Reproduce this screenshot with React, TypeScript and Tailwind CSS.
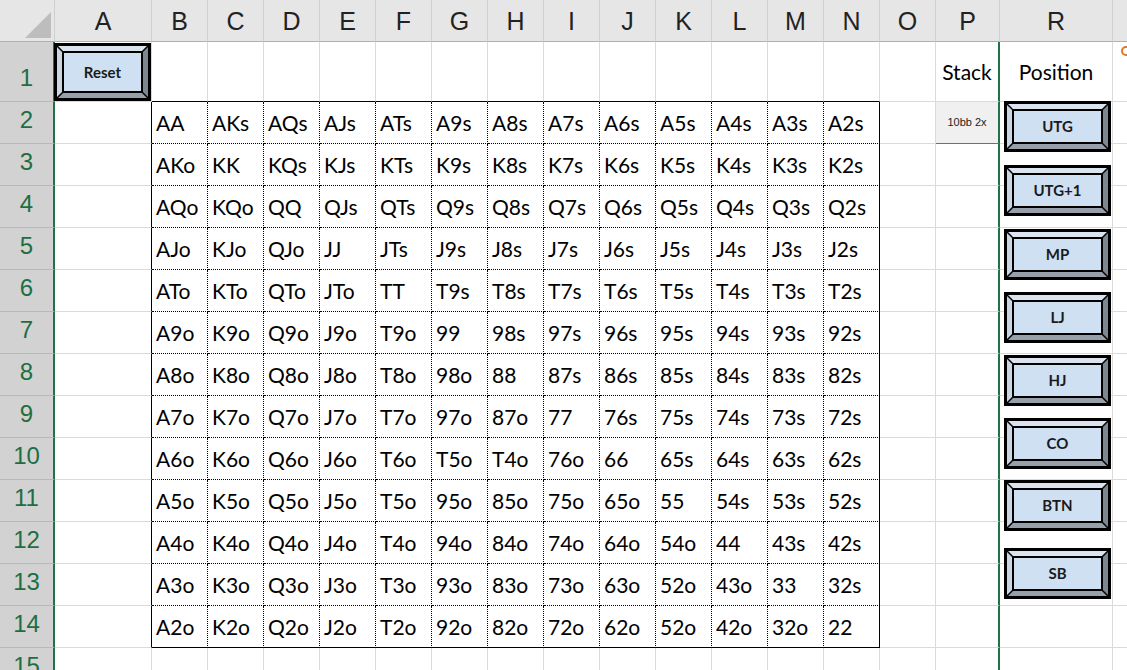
import React from "react";

const HANDS: string[][] = [
  "AA AKs AQs AJs ATs A9s A8s A7s A6s A5s A4s A3s A2s",
  "AKo KK KQs KJs KTs K9s K8s K7s K6s K5s K4s K3s K2s",
  "AQo KQo QQ QJs QTs Q9s Q8s Q7s Q6s Q5s Q4s Q3s Q2s",
  "AJo KJo QJo JJ JTs J9s J8s J7s J6s J5s J4s J3s J2s",
  "ATo KTo QTo JTo TT T9s T8s T7s T6s T5s T4s T3s T2s",
  "A9o K9o Q9o J9o T9o 99 98s 97s 96s 95s 94s 93s 92s",
  "A8o K8o Q8o J8o T8o 98o 88 87s 86s 85s 84s 83s 82s",
  "A7o K7o Q7o J7o T7o 97o 87o 77 76s 75s 74s 73s 72s",
  "A6o K6o Q6o J6o T6o T5o T4o 76o 66 65s 64s 63s 62s",
  "A5o K5o Q5o J5o T5o 95o 85o 75o 65o 55 54s 53s 52s",
  "A4o K4o Q4o J4o T4o 94o 84o 74o 64o 54o 44 43s 42s",
  "A3o K3o Q3o J3o T3o 93o 83o 73o 63o 52o 43o 33 32s",
  "A2o K2o Q2o J2o T2o 92o 82o 72o 62o 52o 42o 32o 22",
].map((r) => r.split(" "));

// spreadsheet columns, widths written out so tailwind picks them up
const COLS: { label: string; w: string }[] = [
  { label: "A", w: "w-[97px]" },
  ...["B", "C", "D", "E", "F", "G", "H", "I", "J", "K", "L", "M", "N", "O"].map(
    (label) => ({ label, w: "w-[56px]" }),
  ),
  { label: "P", w: "w-[64px]" },
  { label: "R", w: "w-[113px]" },
  { label: "", w: "w-[40px]" },
];

const COL_P = 15;
const COL_R = 16;

const ROWS = Array.from({ length: 15 }, (_, i) => i + 1);

const POSITIONS: { name: string; top: string }[] = [
  { name: "UTG", top: "top-[101px]" },
  { name: "UTG+1", top: "top-[165px]" },
  { name: "MP", top: "top-[229px]" },
  { name: "LJ", top: "top-[292px]" },
  { name: "HJ", top: "top-[355px]" },
  { name: "CO", top: "top-[418px]" },
  { name: "BTN", top: "top-[480px]" },
  { name: "SB", top: "top-[548px]" },
];

const inTable = (r: number, c: number) => r >= 2 && r <= 14 && c >= 1 && c <= 13;

function rightBorder(r: number, c: number) {
  if (c === 0 && r >= 2 && r <= 14) return "border-r border-r-black";
  if (inTable(r, c))
    return c === 13
      ? "border-r border-r-black"
      : "border-r border-r-black [border-right-style:dotted]";
  if (c === COL_P) return "border-r-2 border-r-[#217346]";
  return "border-r border-r-[#dadada]";
}

function bottomBorder(r: number, c: number) {
  if (r === 1 && c >= 1 && c <= 13) return "border-b border-b-black";
  if (inTable(r, c))
    return r === 14
      ? "border-b border-b-black"
      : "border-b border-b-black [border-bottom-style:dotted]";
  if (r === 2 && c === COL_P) return "border-b border-b-[#6f6f6f]";
  return "border-b border-b-[#dadada]";
}

function Cell({ r, c }: { r: number; c: number }) {
  const col = COLS[c];
  let content: React.ReactNode = null;
  let extra = "";
  if (inTable(r, c)) {
    content = HANDS[r - 2][c - 1];
    extra = "pl-[4px]";
  } else if (r === 1 && c === COL_P) {
    content = "Stack";
    extra = "justify-center";
  } else if (r === 1 && c === COL_R) {
    content = "Position";
    extra = "justify-center";
  } else if (r === 2 && c === COL_P) {
    content = (
      <span className="font-['Liberation_Sans'] text-[11px] text-[#222]">
        10bb 2x
      </span>
    );
    extra = "justify-center bg-[#f0f0f0]";
  }
  return (
    <div
      className={`flex items-center overflow-hidden whitespace-nowrap ${col.w} shrink-0 ${rightBorder(r, c)} ${bottomBorder(r, c)} ${extra}`}
    >
      {content}
    </div>
  );
}

// excel "bevel" shape: outer stroke, four bevel faces, inner stroke
function BevelButton({
  label,
  className,
  w,
  h,
}: {
  label: string;
  className: string;
  w: number;
  h: number;
}) {
  const W = w - 6;
  const H = h - 6;
  return (
    <div className={`absolute border-[3px] border-black ${className}`}>
      <div className="relative h-full border-[5px] border-t-[#dbe4ee] border-l-[#cbd6e2] border-r-[#7d8790] border-b-[#97a0a9]">
        <div className="h-full border-2 border-black bg-[#cfe0f3] flex items-center justify-center font-[Lato] font-bold text-[15px] text-[#1a1a1a]">
          {label}
        </div>
        <svg
          className="absolute -left-[5px] -top-[5px] pointer-events-none"
          width={W}
          height={H}
        >
          <g stroke="#000" strokeWidth="1.5">
            <line x1="0" y1="0" x2="6" y2="6" />
            <line x1={W} y1="0" x2={W - 6} y2="6" />
            <line x1="0" y1={H} x2="6" y2={H - 6} />
            <line x1={W} y1={H} x2={W - 6} y2={H - 6} />
          </g>
        </svg>
      </div>
    </div>
  );
}

export default function App() {
  return (
    <div className="relative w-[1127px] h-[670px] overflow-hidden bg-white font-[Lato] text-[21px] text-black">
      {/* column headers */}
      <div className="flex h-[42px]">
        <div className="w-[55px] shrink-0 bg-[#e6e6e6] border-b border-b-[#b0b0b0] border-r border-r-[#cfcfcf] flex items-end justify-end pr-[2px] pb-[2px]">
          <svg width="27" height="27" viewBox="0 0 27 27">
            <polygon points="26,0 26,26 0,26" fill="#bdbdbd" />
          </svg>
        </div>
        {COLS.map((col, i) => (
          <div
            key={i}
            className={`${col.w} shrink-0 bg-[#e6e6e6] border-b border-b-[#b0b0b0] border-r border-r-[#d0d0d0] flex items-end justify-center pb-[1px] font-['Liberation_Sans'] text-[25px] leading-none text-[#222]`}
          >
            <span className="pb-[6px]">{col.label}</span>
          </div>
        ))}
      </div>

      {/* body */}
      {ROWS.map((r) => (
        <div key={r} className={`flex ${r === 1 ? "h-[60px]" : "h-[42px]"}`}>
          <div className="w-[55px] shrink-0 bg-[#d2d2d2] border-b border-b-[#b8b8b8] border-r-2 border-r-[#217346] flex items-end justify-center pb-[5px] font-['Liberation_Sans'] text-[24px] text-[#1e6e42]">
            {r}
          </div>
          {COLS.map((_, c) => (
            <Cell key={c} r={r} c={c} />
          ))}
        </div>
      ))}

      <BevelButton
        label="Reset"
        className="left-[54px] top-[43px] w-[97px] h-[58px]"
        w={97}
        h={58}
      />
      {POSITIONS.map((p) => (
        <BevelButton
          key={p.name}
          label={p.name}
          className={`left-[1004px] w-[107px] h-[51px] ${p.top}`}
          w={107}
          h={51}
        />
      ))}

      <div className="absolute left-[1121px] top-[46px] w-[10px] h-[10px] rounded-full border-2 border-[#e0762b]" />
    </div>
  );
}
